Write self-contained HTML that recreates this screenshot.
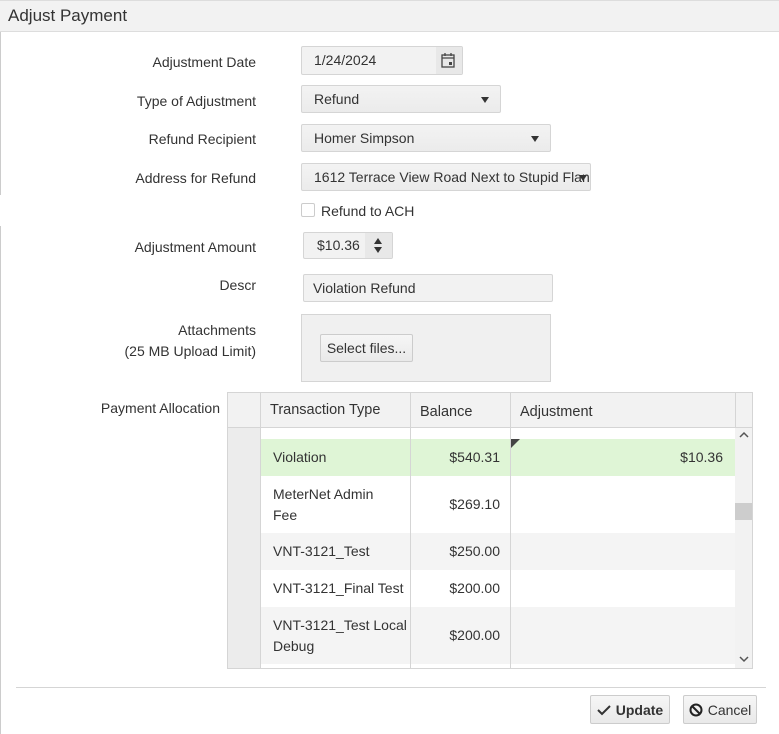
<!DOCTYPE html>
<html><head><style>
*{box-sizing:border-box;margin:0;padding:0}
body{width:779px;height:734px;background:#fff;font-family:"Liberation Sans",sans-serif;font-size:14px;color:#333;position:relative;overflow:hidden}
.a{position:absolute}
.lbl{position:absolute;right:523px;text-align:right;white-space:nowrap}
.in{position:absolute;background:#f2f2f2;border:1px solid #d5d5d5;border-radius:2px;padding-left:12px;line-height:27px;white-space:nowrap;overflow:hidden}
.dd{background:linear-gradient(#f3f3f3,#ebebeb)}
.arr{position:absolute;right:11px;top:11px;width:0;height:0;border-left:4.5px solid transparent;border-right:4.5px solid transparent;border-top:6px solid #333}
.cell{position:absolute;padding:0 10px;display:flex;align-items:center;line-height:21px}
.btn{position:absolute;border:1px solid #ccc;background:linear-gradient(#f6f6f6,#e9e9e9);border-radius:2px;display:flex;align-items:center;justify-content:center;gap:5px}
</style></head><body>
<div class="a" style="left:0;top:0;width:779px;height:32px;background:#f2f2f2;border-bottom:1px solid #ddd;border-top:1px solid #ddd"></div>
<div class="a" style="left:8px;top:6px;font-size:17px;color:#333">Adjust Payment</div>
<div class="a" style="left:0;top:32px;width:1px;height:163px;background:#ccc"></div>
<div class="a" style="left:0;top:226px;width:1px;height:508px;background:#ccc"></div>

<div class="lbl" style="top:54px">Adjustment Date</div>
<div class="in" style="left:301px;top:46px;width:162px;height:29px">1/24/2024
<div class="a" style="right:0;top:0;width:26px;height:27px;background:#e8e8e8">
<svg width="14" height="15" style="position:absolute;left:5px;top:6px" viewBox="0 0 14 15"><rect x="1" y="2" width="12" height="12" fill="none" stroke="#444" stroke-width="1.3"/><line x1="1" y1="5" x2="13" y2="5" stroke="#444" stroke-width="1.3"/><line x1="4" y1="0" x2="4" y2="3" stroke="#444" stroke-width="1.3"/><line x1="10" y1="0" x2="10" y2="3" stroke="#444" stroke-width="1.3"/><rect x="8" y="9" width="3" height="3" fill="#444"/></svg></div></div>

<div class="lbl" style="top:93px">Type of Adjustment</div>
<div class="in dd" style="left:301px;top:85px;width:200px;height:28px">Refund<div class="arr"></div></div>

<div class="lbl" style="top:131px">Refund Recipient</div>
<div class="in dd" style="left:301px;top:124px;width:250px;height:28px">Homer Simpson<div class="arr"></div></div>

<div class="lbl" style="top:170px">Address for Refund</div>
<div class="in dd" style="left:301px;top:163px;width:290px;height:28px">1612 Terrace View Road Next to Stupid Flanders<div class="arr" style="right:3px"></div></div>

<div class="a" style="left:301px;top:203px;width:14px;height:14px;border:1px solid #ccc;border-radius:2px;background:#fff"></div>
<div class="a" style="left:321px;top:203px">Refund to ACH</div>

<div class="lbl" style="top:239px">Adjustment Amount</div>
<div class="in" style="left:303px;top:232px;width:90px;height:27px;padding-left:13px;line-height:25px">$10.36
<div class="a" style="right:0;top:0;width:27px;height:25px;background:#e8e8e8"><div class="a" style="left:9px;top:5px;border-left:4px solid transparent;border-right:4px solid transparent;border-bottom:6px solid #333"></div><div class="a" style="left:9px;top:14px;border-left:4px solid transparent;border-right:4px solid transparent;border-top:6px solid #333"></div></div></div>

<div class="lbl" style="top:277px">Descr</div>
<div class="in" style="left:303px;top:274px;width:250px;height:28px;padding-left:9px">Violation Refund</div>

<div class="lbl" style="top:322px">Attachments</div>
<div class="lbl" style="top:343px">(25 MB Upload Limit)</div>
<div class="a" style="left:301px;top:314px;width:250px;height:68px;background:#f0f0f0;border:1px solid #d5d5d5"></div>
<div class="btn" style="left:320px;top:334px;width:93px;height:28px">Select files...</div>

<div class="lbl" style="right:559px;top:400px">Payment Allocation</div>
<div class="a" style="left:227px;top:392px;width:526px;height:277px;border:1px solid #d5d5d5;background:#fff;overflow:hidden">
 <div class="a" style="left:0;top:0;width:526px;height:35px;background:#f2f2f2;border-bottom:1px solid #d5d5d5"></div>
 <div class="a" style="left:0;top:35px;width:32px;height:240px;background:#ececec"></div>
 <div class="cell" style="left:32px;top:0;height:35px;font-size:14.5px">Transaction Type</div>
 <div class="cell" style="left:182px;top:2px;height:35px;font-size:14.5px">Balance</div>
 <div class="cell" style="left:282px;top:2px;height:35px;font-size:14.5px">Adjustment</div>
 <div class="a" style="left:32px;top:46px;width:475px;height:37px;background:#dff5d6"></div>
 <div class="a" style="left:32px;top:140px;width:475px;height:37px;background:#f4f4f4"></div>
 <div class="a" style="left:32px;top:214px;width:475px;height:57px;background:#f4f4f4"></div>
 <div class="a" style="left:32px;top:0;width:1px;height:277px;background:#d5d5d5"></div>
 <div class="a" style="left:182px;top:0;width:1px;height:277px;background:#d5d5d5"></div>
 <div class="a" style="left:282px;top:0;width:1px;height:277px;background:#d5d5d5"></div>
 <div class="a" style="left:507px;top:0;width:1px;height:35px;background:#d5d5d5"></div>
 <div class="a" style="left:283px;top:46px;border-top:9px solid #444;border-right:9px solid transparent"></div>
 <div class="cell" style="left:35px;top:46px;height:37px">Violation</div>
 <div class="cell" style="left:182px;top:46px;height:37px;width:100px;justify-content:flex-end">$540.31</div>
 <div class="cell" style="left:282px;top:46px;height:37px;width:223px;justify-content:flex-end">$10.36</div>
 <div class="cell" style="left:35px;top:83px;height:57px">MeterNet Admin<br>Fee</div>
 <div class="cell" style="left:182px;top:83px;height:57px;width:100px;justify-content:flex-end">$269.10</div>
 <div class="cell" style="left:35px;top:140px;height:37px">VNT-3121_Test</div>
 <div class="cell" style="left:182px;top:140px;height:37px;width:100px;justify-content:flex-end">$250.00</div>
 <div class="cell" style="left:35px;top:177px;height:37px">VNT-3121_Final Test</div>
 <div class="cell" style="left:182px;top:177px;height:37px;width:100px;justify-content:flex-end">$200.00</div>
 <div class="cell" style="left:35px;top:214px;height:57px">VNT-3121_Test Local<br>Debug</div>
 <div class="cell" style="left:182px;top:214px;height:57px;width:100px;justify-content:flex-end">$200.00</div>
 <div class="a" style="left:507px;top:35px;width:18px;height:240px;background:#f2f2f2"></div>
 <div class="a" style="left:507px;top:110px;width:17px;height:17px;background:#cdcdcd"></div>
 <svg class="a" style="left:510px;top:38px" width="12" height="8"><path d="M2 6 L6 2 L10 6" fill="none" stroke="#555" stroke-width="1.5"/></svg>
 <svg class="a" style="left:510px;top:262px" width="12" height="8"><path d="M2 2 L6 6 L10 2" fill="none" stroke="#555" stroke-width="1.5"/></svg>
</div>

<div class="a" style="left:16px;top:687px;width:750px;height:1px;background:#d5d5d5"></div>
<div class="btn" style="left:590px;top:695px;width:80px;height:29px;font-weight:bold;font-size:14px"><svg width="14" height="12"><path d="M1 6 L5 10 L13 2" fill="none" stroke="#333" stroke-width="2"/></svg>Update</div>
<div class="btn" style="left:683px;top:695px;width:74px;height:29px;font-size:14px"><svg width="14" height="14"><circle cx="7" cy="7" r="5.5" fill="none" stroke="#222" stroke-width="2"/><line x1="3" y1="3" x2="11" y2="11" stroke="#222" stroke-width="2"/></svg>Cancel</div>
</body></html>
